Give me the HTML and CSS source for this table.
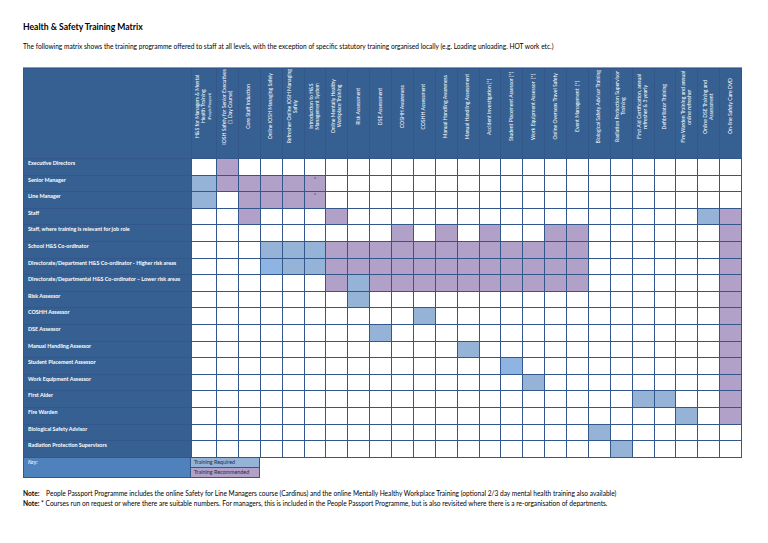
FILE: index.html
```html
<!DOCTYPE html>
<html>
<head>
<meta charset="utf-8">
<title>Health &amp; Safety Training Matrix</title>
<link rel="stylesheet" href="styles.css">
</head>
<body>
<div class="page">
  <h1 class="title">Health &amp; Safety Training Matrix</h1>
  <p class="intro">The following matrix shows the training programme offered to staff at all levels, with the exception of specific statutory training organised locally (e.g. Loading unloading. HOT work etc.)</p>

  <div class="matrix">
    <div class="hd corner"></div>
    <div class="hd"><span>H&amp;S for Managers &amp; Mental<br>Health Training<br><small>(People Passport)</small></span></div>
    <div class="hd"><span>IOSH Safety for Senior Executives<br>(1 Day Course)</span></div>
    <div class="hd"><span>Core Staff Induction</span></div>
    <div class="hd"><span>Online IOSH Managing Safely</span></div>
    <div class="hd"><span>Refresher Online IOSH Managing<br>Safely</span></div>
    <div class="hd"><span>Introduction to H&amp;S<br>Management System</span></div>
    <div class="hd"><span>Online Mentally Healthy<br>Workplace Training</span></div>
    <div class="hd"><span>Risk Assessment</span></div>
    <div class="hd"><span>DSE Assessment</span></div>
    <div class="hd"><span>COSHH Awareness</span></div>
    <div class="hd"><span>COSHH Assessment</span></div>
    <div class="hd"><span>Manual Handling Awareness</span></div>
    <div class="hd"><span>Manual Handling Assessment</span></div>
    <div class="hd"><span>Accident Investigation (*)</span></div>
    <div class="hd"><span>Student Placement Assessor (*)</span></div>
    <div class="hd"><span>Work Equipment Assessor &nbsp;(*)</span></div>
    <div class="hd"><span>Online Overseas Travel Safety</span></div>
    <div class="hd"><span>Event Management &nbsp;(*)</span></div>
    <div class="hd"><span>Biological Safety Advisor Training</span></div>
    <div class="hd"><span>Radiation Protection Supervisor<br>Training</span></div>
    <div class="hd"><span>First Aid Certification, annual<br>refresher &amp; 3 yearly</span></div>
    <div class="hd"><span>Defibrillator Training</span></div>
    <div class="hd"><span>Fire Warden Training and annual<br>online refresher</span></div>
    <div class="hd"><span>Online DSE Training and<br>Assessment</span></div>
    <div class="hd"><span>On-line Safety Care DVD</span></div>

    <!-- Executive Directors -->
    <div class="lbl">Executive Directors</div>
    <i></i><i class="p"></i><i></i><i></i><i></i><i></i><i></i><i></i><i></i><i></i><i></i><i></i><i></i><i></i><i></i><i></i><i></i><i></i><i></i><i></i><i></i><i></i><i></i><i></i><i></i>

    <!-- Senior Manager -->
    <div class="lbl">Senior Manager</div>
    <i class="b"></i><i class="p"></i><i class="p"></i><i class="p"></i><i class="p"></i><i class="p star"></i><i></i><i></i><i></i><i></i><i></i><i></i><i></i><i></i><i></i><i></i><i></i><i></i><i></i><i></i><i></i><i></i><i></i><i></i><i></i>

    <!-- Line Manager -->
    <div class="lbl">Line Manager</div>
    <i class="b"></i><i></i><i class="p"></i><i class="p"></i><i class="p"></i><i class="p star"></i><i></i><i></i><i></i><i></i><i></i><i></i><i></i><i></i><i></i><i></i><i></i><i></i><i></i><i></i><i></i><i></i><i></i><i></i><i></i>

    <!-- Staff -->
    <div class="lbl">Staff</div>
    <i></i><i></i><i class="p"></i><i></i><i></i><i></i><i class="p"></i><i></i><i></i><i></i><i></i><i></i><i></i><i></i><i></i><i></i><i></i><i></i><i></i><i></i><i></i><i></i><i></i><i class="b"></i><i class="p"></i>

    <!-- Staff, where relevant -->
    <div class="lbl">Staff, where training is relevant for job role</div>
    <i></i><i></i><i></i><i></i><i></i><i></i><i></i><i></i><i></i><i class="p"></i><i></i><i class="p"></i><i></i><i class="p"></i><i></i><i></i><i class="p"></i><i class="p"></i><i></i><i></i><i></i><i></i><i></i><i></i><i class="p"></i>

    <!-- School H&S Co-ordinator -->
    <div class="lbl">School H&amp;S Co-ordinator</div>
    <i></i><i></i><i></i><i class="b"></i><i class="b"></i><i class="b"></i><i class="p"></i><i class="p"></i><i class="p"></i><i class="p"></i><i class="p"></i><i class="p"></i><i class="p"></i><i class="p"></i><i class="p"></i><i class="p"></i><i class="p"></i><i class="p"></i><i></i><i></i><i></i><i></i><i></i><i></i><i class="p"></i>

    <!-- Directorate higher -->
    <div class="lbl">Directorate/Department H&amp;S Co-ordinator - Higher risk areas</div>
    <i></i><i></i><i></i><i class="b2"></i><i class="b"></i><i class="b"></i><i class="p"></i><i class="p"></i><i class="p"></i><i class="p"></i><i class="p"></i><i class="p"></i><i class="p"></i><i class="p"></i><i class="p"></i><i class="p"></i><i class="p"></i><i class="p"></i><i></i><i></i><i></i><i></i><i></i><i></i><i class="p"></i>

    <!-- Directorate lower -->
    <div class="lbl">Directorate/Departmental H&amp;S Co-ordinator – Lower risk areas</div>
    <i></i><i></i><i></i><i></i><i></i><i></i><i class="p"></i><i class="b"></i><i class="p"></i><i class="p"></i><i class="p"></i><i class="p"></i><i class="p"></i><i class="p"></i><i class="p"></i><i class="p"></i><i class="p"></i><i class="p"></i><i></i><i></i><i></i><i></i><i></i><i></i><i class="p"></i>

    <!-- Risk Assessor -->
    <div class="lbl">Risk Assessor</div>
    <i></i><i></i><i></i><i></i><i></i><i></i><i></i><i class="b"></i><i></i><i></i><i></i><i></i><i></i><i></i><i></i><i></i><i></i><i></i><i></i><i></i><i></i><i></i><i></i><i></i><i class="p"></i>

    <!-- COSHH Assessor -->
    <div class="lbl">COSHH Assessor</div>
    <i></i><i></i><i></i><i></i><i></i><i></i><i></i><i></i><i></i><i></i><i class="b"></i><i></i><i></i><i></i><i></i><i></i><i></i><i></i><i></i><i></i><i></i><i></i><i></i><i></i><i class="p"></i>

    <!-- DSE Assessor -->
    <div class="lbl">DSE Assessor</div>
    <i></i><i></i><i></i><i></i><i></i><i></i><i></i><i></i><i class="b"></i><i></i><i></i><i></i><i></i><i></i><i></i><i></i><i></i><i></i><i></i><i></i><i></i><i></i><i></i><i></i><i class="p"></i>

    <!-- Manual Handling Assessor -->
    <div class="lbl">Manual Handling Assessor</div>
    <i></i><i></i><i></i><i></i><i></i><i></i><i></i><i></i><i></i><i></i><i></i><i></i><i class="b"></i><i></i><i></i><i></i><i></i><i></i><i></i><i></i><i></i><i></i><i></i><i></i><i class="p"></i>

    <!-- Student Placement Assessor -->
    <div class="lbl">Student Placement Assessor</div>
    <i></i><i></i><i></i><i></i><i></i><i></i><i></i><i></i><i></i><i></i><i></i><i></i><i></i><i></i><i class="b2"></i><i></i><i></i><i></i><i></i><i></i><i></i><i></i><i></i><i></i><i class="p"></i>

    <!-- Work Equipment Assessor -->
    <div class="lbl">Work Equipment Assessor</div>
    <i></i><i></i><i></i><i></i><i></i><i></i><i></i><i></i><i></i><i></i><i></i><i></i><i></i><i></i><i></i><i class="b"></i><i></i><i></i><i></i><i></i><i></i><i></i><i></i><i></i><i class="p"></i>

    <!-- First Aider -->
    <div class="lbl">First Aider</div>
    <i></i><i></i><i></i><i></i><i></i><i></i><i></i><i></i><i></i><i></i><i></i><i></i><i></i><i></i><i></i><i></i><i></i><i></i><i></i><i></i><i class="b"></i><i class="b"></i><i></i><i></i><i class="p"></i>

    <!-- Fire Warden -->
    <div class="lbl">Fire Warden</div>
    <i></i><i></i><i></i><i></i><i></i><i></i><i></i><i></i><i></i><i></i><i></i><i></i><i></i><i></i><i></i><i></i><i></i><i></i><i></i><i></i><i></i><i></i><i class="b"></i><i></i><i class="p"></i>

    <!-- Biological Safety Advisor -->
    <div class="lbl">Biological Safety Advisor</div>
    <i></i><i></i><i></i><i></i><i></i><i></i><i></i><i></i><i></i><i></i><i></i><i></i><i></i><i></i><i></i><i></i><i></i><i></i><i class="b"></i><i></i><i></i><i></i><i></i><i></i><i></i>

    <!-- Radiation Protection Supervisors -->
    <div class="lbl">Radiation Protection Supervisors</div>
    <i></i><i></i><i></i><i></i><i></i><i></i><i></i><i></i><i></i><i></i><i></i><i></i><i></i><i></i><i></i><i></i><i></i><i></i><i></i><i class="b"></i><i></i><i></i><i></i><i></i><i></i>
  </div>

  <div class="key">
    <div class="key-lbl">Key:</div>
    <div class="legend">
      <div class="lg-req">Training Required</div>
      <div class="lg-rec">Training Recommended</div>
    </div>
  </div>

  <div class="notes">
    <p><b>Note:</b>&nbsp;&nbsp;&nbsp; People Passport Programme includes the online Safety for Line Managers course (Cardinus) and the online Mentally Healthy Workplace Training (optional 2/3 day mental health training also available)</p>
    <p><b>Note:</b> * Courses run on request or where there are suitable numbers. For managers, this is included in the People Passport Programme, but is also revisited where there is a re-organisation of departments.</p>
  </div>
</div>
</body>
</html>
```

FILE: styles.css
```css
html, body {
  margin: 0;
  padding: 0;
  background: #ffffff;
}

body {
  font-family: Lato, "Liberation Sans", sans-serif;
  color: #000;
}

.page {
  padding: 22px 0 0 23px;
}

.title {
  margin: 0;
  font-size: 8.6px;
  line-height: 10px;
  font-weight: 700;
}

.intro {
  margin: 10px 0 17px;
  font-size: 6.6px;
  line-height: 8px;
}

.matrix {
  box-sizing: border-box;
  width: 719px;
  display: grid;
  grid-template-columns: 167px 24px repeat(24, 1fr);
  grid-template-rows: 89px repeat(18, 15.6px);
  gap: 1px;
  padding: 1px;
  background: #33578a;
  border-top: 1px solid #7d9cc6;
}

.hd {
  background: #366092;
  display: flex;
  align-items: center;
  justify-content: center;
  overflow: hidden;
  padding-bottom: 14px;
}

.hd span {
  writing-mode: vertical-rl;
  transform: rotate(180deg);
  color: #ffffff;
  font-size: 5.1px;
  line-height: 5.8px;
  text-align: center;
  white-space: nowrap;
}

.hd small {
  font-size: 3.6px;
}

.lbl {
  background: #366092;
  color: #ffffff;
  font-size: 5.4px;
  line-height: 6px;
  font-weight: 700;
  padding: 1px 4px 0;
  white-space: nowrap;
}

.matrix i {
  display: block;
  background: #ffffff;
  position: relative;
}

.matrix i.p {
  background: #b1a0c7;
}

.matrix i.b {
  background: #95b3d7;
}

.matrix i.b2 {
  background: #8db4e2;
}

.matrix i.star::after {
  content: "*";
  position: absolute;
  left: 0;
  right: 0;
  top: 0;
  text-align: center;
  font-style: normal;
  font-size: 6px;
  line-height: 6px;
  color: #3a2b4a;
}

.key {
  display: flex;
  height: 20px;
}

.key-lbl {
  box-sizing: border-box;
  width: 168px;
  height: 20px;
  background: #4f81bd;
  border: 1px solid #33578a;
  border-top: 0;
  color: #ffffff;
  font-style: italic;
  font-size: 5.4px;
  line-height: 6px;
  padding: 1px 4px 0;
}

.legend {
  box-sizing: border-box;
  width: 69px;
  height: 20px;
  border: 1px solid #33578a;
  border-top: 0;
  border-left: 0;
  display: flex;
  flex-direction: column;
  gap: 1px;
  background: #33578a;
}

.lg-req,
.lg-rec {
  flex: 1;
  font-size: 5.4px;
  line-height: 9px;
  padding-left: 3px;
  color: #1f2f4a;
}

.lg-req {
  background: #95b3d7;
}

.lg-rec {
  background: #b1a0c7;
}

.notes {
  margin-top: 10px;
}

.notes p {
  margin: 0;
  font-size: 6.6px;
  line-height: 10px;
}
```
